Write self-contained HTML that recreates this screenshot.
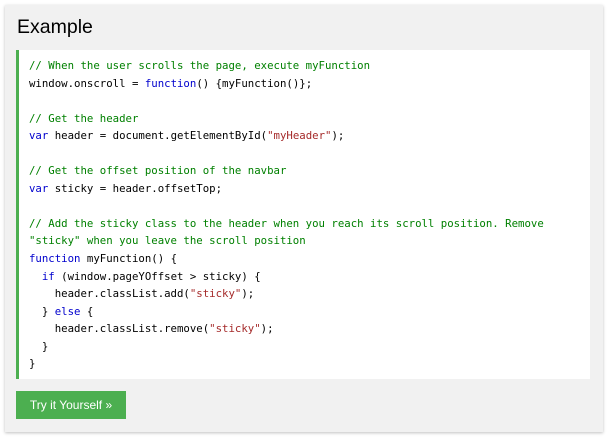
<!DOCTYPE html>
<html><head><style>
body{margin:0;background:#fff;width:610px;height:438px;overflow:hidden;font-family:"Liberation Sans",sans-serif}
.panel{position:absolute;left:5px;top:5px;width:598px;height:427px;background:#f1f1f1;box-shadow:0 1px 3px rgba(0,0,0,.25)}
h2{position:absolute;left:12px;top:11px;margin:0;font-size:19.5px;font-weight:normal;color:#000}
.code{position:absolute;left:11px;top:45px;width:574px;height:329px;background:#fff;border-left:3px solid #4caf50;box-sizing:border-box}
pre{margin:0;position:absolute;left:10px;top:7px;font-family:"DejaVu Sans Mono",monospace;font-size:10.7px;line-height:17.55px;color:#000}
.c{color:#008000}.k{color:#0000cd}.s{color:#a52a2a}
.btn{position:absolute;left:11px;top:386px;width:110px;height:28px;background:#4caf50;color:#fff;font-size:12px;line-height:28px;text-align:center}
</style></head><body>
<div class="panel">
<h2>Example</h2>
<div class="code"><pre><span class="c">// When the user scrolls the page, execute myFunction</span>
window.onscroll = <span class="k">function</span>() {myFunction()};

<span class="c">// Get the header</span>
<span class="k">var</span> header = document.getElementById(<span class="s">"myHeader"</span>);

<span class="c">// Get the offset position of the navbar</span>
<span class="k">var</span> sticky = header.offsetTop;

<span class="c">// Add the sticky class to the header when you reach its scroll position. Remove
"sticky" when you leave the scroll position</span>
<span class="k">function</span> myFunction() {
  <span class="k">if</span> (window.pageYOffset &gt; sticky) {
    header.classList.add(<span class="s">"sticky"</span>);
  } <span class="k">else</span> {
    header.classList.remove(<span class="s">"sticky"</span>);
  }
}</pre></div>
<div class="btn">Try it Yourself »</div>
</div>
</body></html>
